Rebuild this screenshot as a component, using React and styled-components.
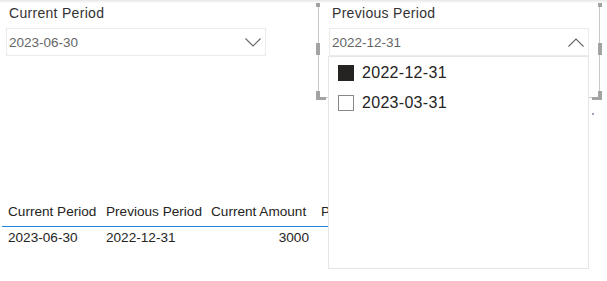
import React from "react";
import styled, { createGlobalStyle } from "styled-components";

const GlobalStyle = createGlobalStyle`
  html, body { margin: 0; padding: 0; background: #fff; }
  body { font-family: "Liberation Sans", Arial, sans-serif; }
`;

const Canvas = styled.div`
    position: relative;
    width: 607px;
    height: 281px;
    overflow: hidden;
    background: #fff;

    &::before {
        content: "";
        position: absolute;
        top: 0;
        left: 0;
        right: 0;
        height: 3px;
        background: linear-gradient(#e6e6e6, #fff);
        z-index: 5;
    }
`;

const SlicerRow = styled.div`
    display: flex;
    align-items: flex-start;
    height: 99px;
    padding-left: 6px;
`;

const Slicer = styled.div`
    width: 260px;
    padding-top: 4px;
`;

const Frame = styled.div`
    position: relative;
    margin-left: 52px;
    width: 261px;
    height: 93px;
    padding: 3px 9px 0 10px;
    border: 1px solid #c8c8c8;
`;

const Label = styled.div`
    height: 24px;
    padding-left: 3px;
    font-size: 14px;
    line-height: 19px;
    color: #333;
    letter-spacing: 0.3px;
`;

const Dropdown = styled.div`
    display: flex;
    align-items: center;
    justify-content: space-between;
    box-sizing: border-box;
    width: 260px;
    height: 28px;
    padding: 0 4px 0 2px;
    border: 1px solid #ebebeb;
    font-size: 13.5px;
    color: #666;
`;

const Handle = styled.span`
    position: absolute;
    box-sizing: border-box;
    border-color: #a3a3a3;
    border-style: solid;
    border-width: 0;
    ${({ $pos }) => ({
        tl: "top:-1px;left:-3px;width:8px;height:7px;border-top-width:3px;border-left-width:4px;",
        tr: "top:-1px;right:-3px;width:8px;height:7px;border-top-width:3px;border-right-width:4px;",
        bl: "bottom:-3px;left:-3px;width:10px;height:9px;border-bottom-width:3px;border-left-width:4px;",
        br: "bottom:-3px;right:-3px;width:10px;height:9px;border-bottom-width:3px;border-right-width:4px;",
        ml: "top:42px;left:-3px;width:4px;height:12px;background:#a3a3a3;",
        mr: "top:42px;right:-3px;width:4px;height:12px;background:#a3a3a3;",
    })[$pos]}
`;

const Dot = styled.span`
    position: absolute;
    top: 112px;
    right: 5px;
    width: 2px;
    height: 2px;
    background: #9aa3b8;
`;

const Popup = styled.div`
    position: absolute;
    top: 55px;
    left: 9px;
    z-index: 3;
    box-sizing: border-box;
    width: 261px;
    height: 213px;
    padding: 8px 0 0 9px;
    background: #fff;
    border: 1px solid #e6e6e6;
    display: flex;
    flex-direction: column;
    gap: 14px;
`;

const Item = styled.div`
    display: flex;
    align-items: center;
    gap: 8px;
    height: 16px;
    font-size: 16px;
    color: #252423;
    letter-spacing: 0.3px;
`;

const Box = styled.span`
    box-sizing: border-box;
    width: 16px;
    height: 16px;
    border: 1px solid ${({ $checked }) => ($checked ? "#252423" : "#8a8886")};
    background: ${({ $checked }) => ($checked ? "#252423" : "#fff")};
`;

const Table = styled.div`
    display: grid;
    grid-template-columns: 98px 105px 110px 1fr;
    width: 440px;
    margin: 99px 0 0 2px;
    font-size: 13.6px;
    color: #252423;
`;

const HeadCell = styled.div`
    height: 28px;
    line-height: 27px;
    padding: 0 6px;
    white-space: nowrap;
    border-bottom: 1px solid #1f86e0;
`;

const Cell = styled.div`
    height: 22px;
    line-height: 22px;
    padding: 0 6px;
    white-space: nowrap;
    text-align: ${({ $num }) => ($num ? "right" : "left")};
`;

const Chevron = ({ up }) => (
    <svg width="16" height="9" viewBox="0 0 16 9" fill="none">
        <path
            d={up ? "M0.5 8.5 L8 1 L15.5 8.5" : "M0.5 0.5 L8 8 L15.5 0.5"}
            stroke="#666"
            strokeWidth="1.1"
        />
    </svg>
);

const App = () => {
    const options = [
        { value: "2022-12-31", checked: true },
        { value: "2023-03-31", checked: false },
    ];

    return (
        <>
            <GlobalStyle />
            <Canvas>
                <SlicerRow>
                    <Slicer>
                        <Label>Current Period</Label>
                        <Dropdown>
                            <span>2023-06-30</span>
                            <Chevron />
                        </Dropdown>
                    </Slicer>
                    <Frame>
                        <Label>Previous Period</Label>
                        <Dropdown>
                            <span>2022-12-31</span>
                            <Chevron up />
                        </Dropdown>
                        <Handle $pos="tl" />
                        <Handle $pos="tr" />
                        <Handle $pos="bl" />
                        <Handle $pos="br" />
                        <Handle $pos="ml" />
                        <Handle $pos="mr" />
                        <Dot />
                        <Popup>
                            {options.map((o) => (
                                <Item key={o.value}>
                                    <Box $checked={o.checked} />
                                    {o.value}
                                </Item>
                            ))}
                        </Popup>
                    </Frame>
                </SlicerRow>
                <Table>
                    <HeadCell>Current Period</HeadCell>
                    <HeadCell>Previous Period</HeadCell>
                    <HeadCell>Current Amount</HeadCell>
                    <HeadCell>Previous Amount</HeadCell>
                    <Cell>2023-06-30</Cell>
                    <Cell>2022-12-31</Cell>
                    <Cell $num>3000</Cell>
                    <Cell />
                </Table>
            </Canvas>
        </>
    );
};

export default App;
